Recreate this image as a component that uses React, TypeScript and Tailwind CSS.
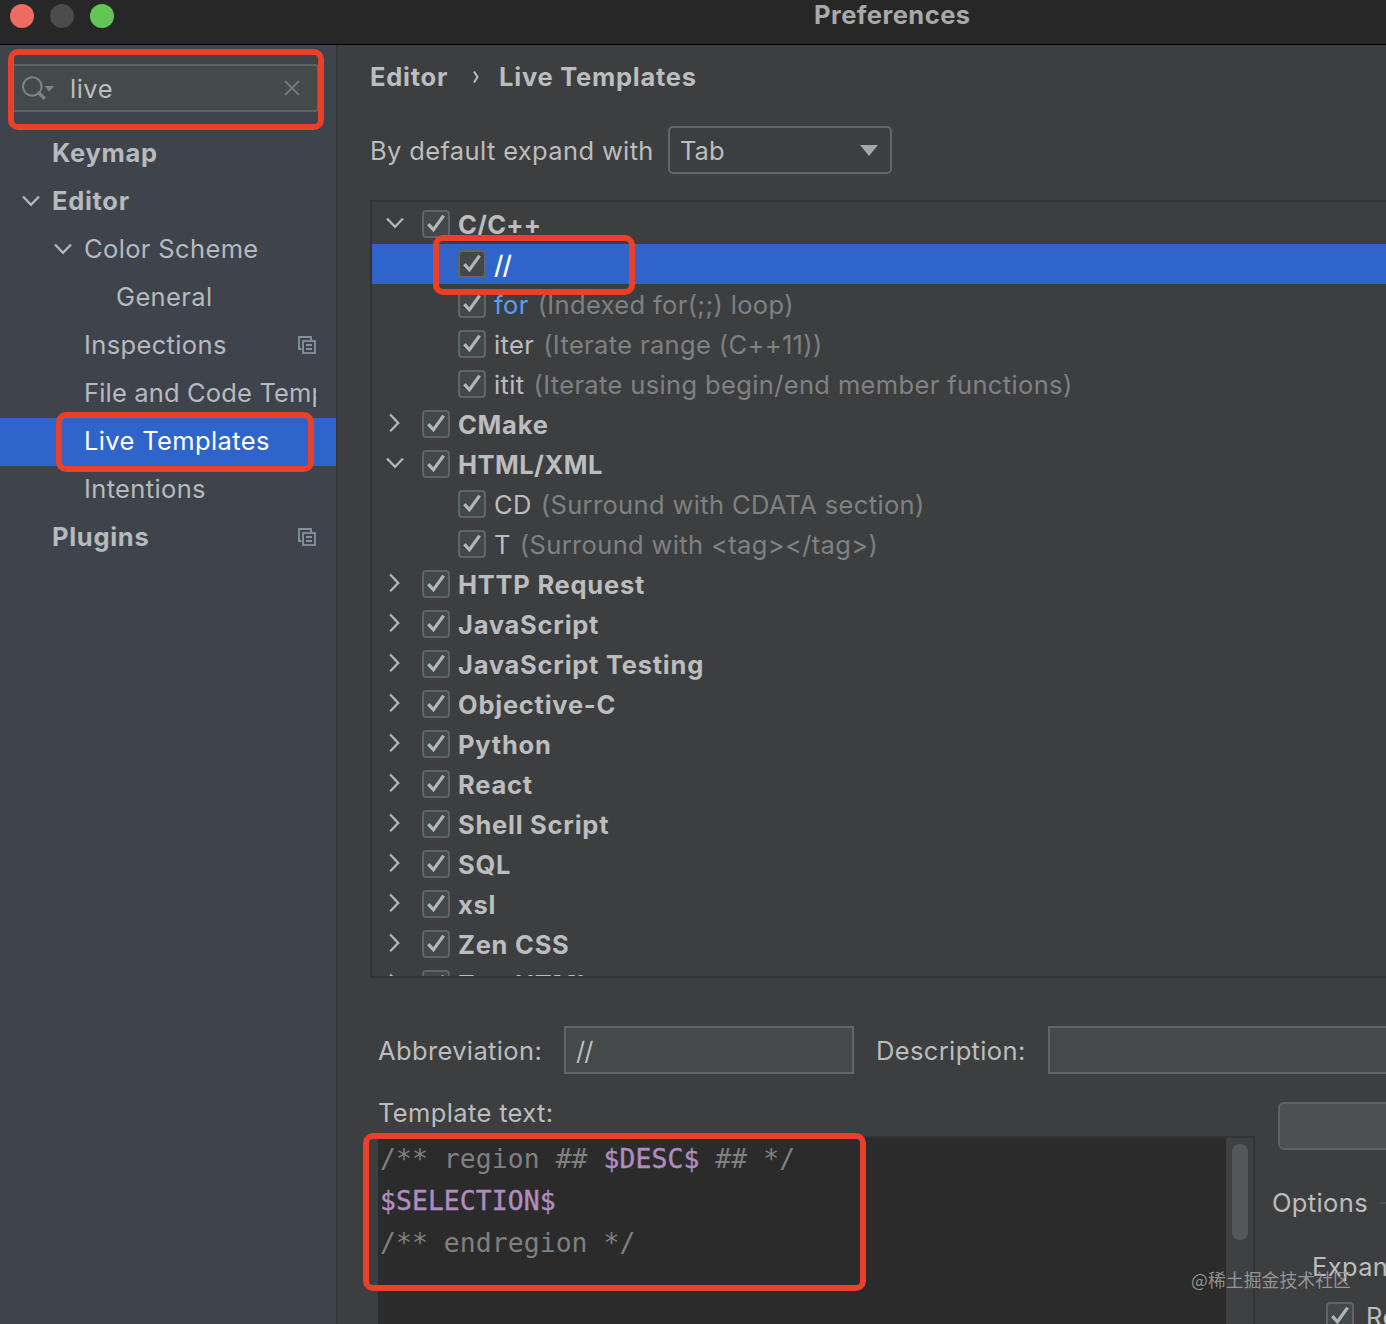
import type { ReactNode } from 'react'

const MARK = 'pointer-events-none absolute z-10 rounded-[10px] border-[6px] border-[#ea4029]'

function Chevron({ open = false }: { open?: boolean }) {
  return (
    <svg className="block h-5 w-5 shrink-0" viewBox="0 0 20 20" fill="none" stroke="#b4b7b9" strokeWidth="2.3">
      <path d={open ? 'M2 5.5 10 13.8 18 5.5' : 'M5.2 1.5 13.2 10 5.2 18.3'} />
    </svg>
  )
}

function Check({ dark = false }: { dark?: boolean }) {
  return (
    <span
      className={
        'flex h-7 w-7 shrink-0 items-center justify-center rounded-[4px] border-2 ' +
        (dark ? 'border-[#666560] bg-[#43494a]' : 'border-[#606465] bg-[#43494a]')
      }
    >
      <svg className="block h-6 w-6 shrink-0" viewBox="0 0 24 24" fill="none" stroke="#b3b6b7" strokeWidth="3.2">
        <path d="M4.3 12.2 9.4 17.8 19.6 3.6" />
      </svg>
    </span>
  )
}

function CopyIcon() {
  return (
    <svg className="absolute top-[14px] left-[298px] h-[18px] w-[18px]" viewBox="0 0 18 18" fill="none" stroke="#87939a" strokeWidth="1.8">
      <path d="M3.5 13H1V1h12v3" />
      <rect x="5" y="5" width="12" height="12" />
      <path d="M8 9h6M8 13h6" />
    </svg>
  )
}

type NavItem = { label: string; pad: string; bold?: boolean; open?: boolean; copy?: boolean; selected?: boolean }

const nav: NavItem[] = [
  { label: 'Keymap', pad: 'pl-[52px]', bold: true },
  { label: 'Editor', pad: 'pl-[21px]', bold: true, open: true },
  { label: 'Color Scheme', pad: 'pl-[53px]', open: true },
  { label: 'General', pad: 'pl-[116px]' },
  { label: 'Inspections', pad: 'pl-[84px]', copy: true },
  { label: 'File and Code Templates', pad: 'pl-[84px] tracking-[0.16px]' },
  { label: 'Live Templates', pad: 'pl-[84px]', selected: true },
  { label: 'Intentions', pad: 'pl-[84px]' },
  { label: 'Plugins', pad: 'pl-[52px]', bold: true, copy: true },
]

function NavRow({ item }: { item: NavItem }) {
  return (
    <div
      className={
        'relative flex h-12 items-center pb-[2px] ' +
        item.pad +
        (item.selected ? ' bg-[#2f65ca] text-white' : ' text-[#b7babd]') +
        (item.bold ? ' font-bold tracking-[0.7px]' : '')
      }
    >
      {item.open && (
        <span className="mr-[11px]">
          <Chevron open />
        </span>
      )}
      <span className="mr-5 overflow-hidden leading-9 whitespace-nowrap">{item.label}</span>
      {item.copy && <CopyIcon />}
      {item.selected && <span className={MARK + ' -top-[6px] left-[56px] h-[60px] w-[258px]'} />}
    </div>
  )
}

type TreeItem = { label: string; group?: boolean; open?: boolean; note?: string; tone?: string; selected?: boolean }

const tree: TreeItem[] = [
  { label: 'C/C++', group: true, open: true, tone: 'tracking-[0.2px]' },
  { label: '//', selected: true },
  { label: 'for', note: '(Indexed for(;;) loop)', tone: 'text-[#589df6]' },
  { label: 'iter', note: '(Iterate range (C++11))' },
  { label: 'itit', note: '(Iterate using begin/end member functions)' },
  { label: 'CMake', group: true },
  { label: 'HTML/XML', group: true, open: true, tone: 'tracking-[0.45px]' },
  { label: 'CD', note: '(Surround with CDATA section)' },
  { label: 'T', note: '(Surround with <tag></tag>)' },
  { label: 'HTTP Request', group: true },
  { label: 'JavaScript', group: true },
  { label: 'JavaScript Testing', group: true },
  { label: 'Objective-C', group: true },
  { label: 'Python', group: true },
  { label: 'React', group: true },
  { label: 'Shell Script', group: true },
  { label: 'SQL', group: true },
  { label: 'xsl', group: true },
  { label: 'Zen CSS', group: true },
  { label: 'Zen HTML', group: true },
]

function TreeRow({ item }: { item: TreeItem }) {
  return (
    <div className={'relative flex h-10 shrink-0 items-center ' + (item.selected ? 'bg-[#2f65ca]' : '')}>
      {item.group ? (
        <>
          <span className="mr-[17px] ml-[13px] -mt-[3px]">
            <Chevron open={item.open} />
          </span>
          <Check />
          <span className={'ml-2 pt-px font-bold whitespace-nowrap ' + (item.tone ?? 'tracking-[0.75px]')}>{item.label}</span>
        </>
      ) : (
        <>
          <span className="ml-[86px]">
            <Check dark={item.selected} />
          </span>
          <span className={'ml-2 pt-px whitespace-nowrap ' + (item.tone ?? (item.selected ? 'pt-[2px] font-medium tracking-[-1px] text-white' : ''))}>
            {item.label}
          </span>
          {item.note && <span className="ml-[9px] pt-px whitespace-nowrap text-[#7f8182]">{item.note}</span>}
        </>
      )}
      {item.selected && <span className={MARK + ' -top-[9px] left-[61px] h-[60px] w-[202px]'} />}
    </div>
  )
}

function Var({ children }: { children: ReactNode }) {
  return <span className="text-[#b08cc0] [-webkit-text-stroke:0.4px_#b08cc0]">{children}</span>
}

export default function App() {
  return (
    <div className="relative flex h-[1324px] w-[1386px] flex-col overflow-hidden bg-[#3d3e40] font-['Inter',sans-serif] text-[25.5px] leading-none tracking-[0.36px] text-[#bcbdbe]">
      <header className="relative flex h-[45px] shrink-0 items-start border-b border-black bg-[#272727]">
        <div className="mt-1 ml-[10px] flex gap-4">
          <span className="h-6 w-6 rounded-full bg-[#ed6b60]" />
          <span className="h-6 w-6 rounded-full bg-[#4b4b4b]" />
          <span className="h-6 w-6 rounded-full bg-[#61c655]" />
        </div>
        <h1 className="mt-[2px] ml-[700px] font-bold tracking-[0.45px] text-[#a9a9a9]">Preferences</h1>
      </header>

      <div className="flex min-h-0 flex-1">
        <aside className="w-[338px] shrink-0 border-r-2 border-[#35373a] bg-[#3e434c]">
          <div className="relative h-[85px] pt-[19px] pl-[10px]">
            <div className="flex h-12 w-[309px] items-center rounded-r-[4px] border-y-2 border-r-2 border-[#5c6365] bg-[#444949]">
              <svg className="ml-3 h-6 w-8 shrink-0" viewBox="0 0 32 24" fill="none" stroke="#7e8486">
                <circle cx="10.3" cy="10.5" r="9.3" strokeWidth="2" />
                <path d="M16 16 22.8 22.8" strokeWidth="3.4" />
                <path d="M22.5 10h9.5l-4.7 5.5z" fill="#7e8486" stroke="none" />
              </svg>
              <span className="ml-4 flex-1 pt-[2px] tracking-[0.5px]">live</span>
              <svg className="mr-[17px] h-4 w-4" viewBox="0 0 16 16" fill="none" stroke="#73787a" strokeWidth="1.8">
                <path d="m1 1 14 14M15 1 1 15" />
              </svg>
            </div>
            <span className={MARK + ' top-1 left-[8px] h-[81px] w-[316px]'} />
          </div>
          <nav>
            {nav.map((item) => (
              <NavRow key={item.label} item={item} />
            ))}
          </nav>
        </aside>

        <main className="flex min-w-0 flex-1 flex-col">
          <div className="mt-[20px] ml-8 flex h-6 items-center font-bold tracking-[0.75px]">
            <span>Editor</span>
            <svg className="mr-[19px] ml-6 h-4 w-2 shrink-0" viewBox="0 0 8 16" fill="none" stroke="#bcbdbe" strokeWidth="2">
              <path d="M2 2.5 5.5 8 2 13.5" />
            </svg>
            <span>Live Templates</span>
          </div>

          <div className="mt-[37px] ml-8 flex h-12 items-center">
            <span className="w-[298px] pt-[2px] whitespace-nowrap">By default expand with</span>
            <div className="flex h-12 w-[224px] items-center justify-between rounded-[5px] border-2 border-[#646566] pr-3 pl-[10px]">
              <span className="pt-[2px] tracking-[0px]">Tab</span>
              <svg className="h-[11px] w-[18px]" viewBox="0 0 18 11" fill="#a5a7a8">
                <path d="M0 0h18L9 11z" />
              </svg>
            </div>
          </div>

          <section className="mt-[26px] ml-8 flex h-[778px] shrink-0 flex-col overflow-hidden border-2 border-r-0 border-[#323334] pt-[2px]">
            {tree.map((item) => (
              <TreeRow key={item.label} item={item} />
            ))}
          </section>

          <div className="mt-12 ml-10 flex h-12 shrink-0 items-center">
            <label className="w-[186px] pt-[2px]">Abbreviation:</label>
            <div className="flex h-12 w-[290px] items-center border-2 border-[#646566] bg-[#454949] pt-[2px] pl-[10px] tracking-[-0.9px]">//</div>
            <label className="ml-[22px] w-[172px] pt-[2px]">Description:</label>
            <div className="h-12 flex-1 border-2 border-r-0 border-[#646566] bg-[#454949]" />
          </div>

          <div className="ml-10 flex min-h-0 flex-1">
            <div className="relative flex w-[877px] shrink-0 flex-col">
              <div className="flex h-[62px] shrink-0 items-center pt-4">Template text:</div>
              <div className="flex min-h-0 flex-1 border-t-2 border-r-2 border-[#323334] bg-[#2b2b2b]">
                <pre className="flex-1 pl-[2px] font-['DejaVu_Sans_Mono',monospace] text-[26.4px] leading-[42px] tracking-[0.08px] text-[#808080]">
                  {'/** region ## '}
                  <Var>$DESC$</Var>
                  {' ## */\n'}
                  <Var>$SELECTION$</Var>
                  {'\n/** endregion */'}
                </pre>
                <div className="w-[27px] bg-[#3f4042] pt-[6px] pl-[6px]">
                  <div className="h-24 w-4 rounded-full bg-[#555658]" />
                </div>
              </div>
              <span className={MARK + ' top-[59px] -left-[15px] h-[158px] w-[503px]'} />
            </div>

            <div className="min-w-0 flex-1 overflow-hidden pt-7 pl-[17px]">
              <div className="ml-[6px] h-12 w-40 rounded-[6px] border-2 border-[#5d6263] bg-[#4c5052]" />
              <div className="mt-[39px] flex h-7 items-center">
                <span>Options</span>
                <span className="ml-3 h-[2px] w-10 shrink-0 bg-[#515254]" />
              </div>
              <div className="mt-9 ml-10 flex h-7 items-center whitespace-nowrap">Expand with</div>
              <div className="mt-[21px] ml-[54px] flex h-7 items-center whitespace-nowrap">
                <Check />
                <span className="ml-3 pt-[2px]">Reformat</span>
              </div>
            </div>
          </div>
        </main>
      </div>

      <span className="absolute top-[1269px] left-[1191px] z-20 font-['Noto_Sans_CJK_SC',sans-serif] text-[17.8px] leading-5 tracking-[0.1px] whitespace-nowrap text-[#a0a0a0]/90">
        @稀土掘金技术社区
      </span>
    </div>
  )
}
